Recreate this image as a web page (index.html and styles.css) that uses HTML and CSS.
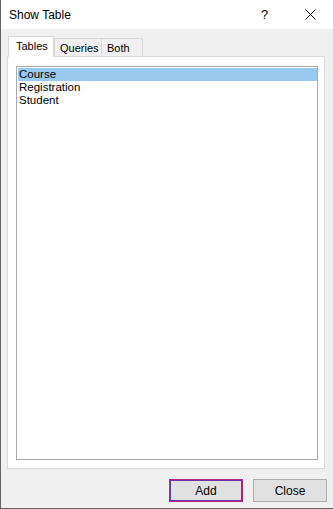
FILE: index.html
```html
<!DOCTYPE html>
<html>
<head>
<meta charset="utf-8">
<link rel="stylesheet" href="styles.css">
</head>
<body>
<div class="window">
  <div class="titlebar">
    <span class="title">Show Table</span>
    <span class="help">?</span>
    <span class="close-x">
      <svg width="11" height="11" viewBox="0 0 11 11"><path d="M0.5 0.5 L10.5 10.5 M10.5 0.5 L0.5 10.5" stroke="#000" stroke-width="1" fill="none"/></svg>
    </span>
  </div>
  <div class="content">
    <div class="tabs">
      <div class="tab active tab-tables">Tables</div>
      <div class="tab tab-queries">Queries</div>
      <div class="tab tab-both">Both</div>
    </div>
    <div class="panel">
      <div class="listbox">
        <div class="item selected">Course</div>
        <div class="item">Registration</div>
        <div class="item">Student</div>
      </div>
    </div>
    <div class="buttons">
      <button class="btn default">Add</button>
      <button class="btn">Close</button>
    </div>
  </div>
</div>
</body>
</html>
```
FILE: styles.css
```css
html, body {
  margin: 0;
  padding: 0;
}
body {
  width: 333px;
  height: 509px;
  overflow: hidden;
  font-family: "Liberation Sans", Arial, sans-serif;
  font-size: 12px;
  color: #000;
}
.window {
  box-sizing: border-box;
  width: 333px;
  height: 509px;
  border-left: 1px solid #646464;
  border-bottom: 1px solid #646464;
  background: #f0f0f0;
  display: flex;
  flex-direction: column;
}
.titlebar {
  height: 29px;
  background: #fff;
  display: flex;
  align-items: center;
  padding-left: 8px;
}
.title {
  flex: 1;
  font-size: 12px;
}
.help {
  font-size: 13px;
  width: 12px;
  margin-right: 32px;
}
.close-x {
  width: 11px;
  height: 11px;
  margin-right: 17px;
  display: flex;
}
.content {
  padding: 7px 0 0 6px;
  display: flex;
  flex-direction: column;
}
.tabs {
  display: flex;
  align-items: flex-end;
  height: 20px;
  padding-left: 1px;
  position: relative;
  z-index: 1;
}
.tab {
  box-sizing: border-box;
  height: 18px;
  border: 1px solid #d9d9d9;
  border-bottom: none;
  background: #f0f0f0;
  padding: 3px 0 0 5px;
  margin-left: -1px;
  line-height: 13px;
  font-size: 11px;
  white-space: nowrap;
}
.tab-queries {
  width: 48px;
  margin-left: 0;
}
.tab-both {
  width: 42px;
}
.tab.active {
  width: 46px;
  height: 21px;
  margin-bottom: -1px;
  margin-left: 0;
  background: #fff;
  padding: 3px 0 0 7px;
}
.panel {
  box-sizing: border-box;
  width: 318px;
  height: 413px;
  background: #fff;
  border: 1px solid #d9d9d9;
  padding: 9px 6px 8px 8px;
  display: flex;
}
.listbox {
  flex: 1;
  border: 1px solid #a9a9a9;
  padding: 1px 0 1px 1px;
}
.item {
  height: 13px;
  line-height: 13px;
  padding-left: 1px;
  font-size: 11.5px;
}
.item.selected {
  background: #99c9ef;
}
.buttons {
  display: flex;
  justify-content: flex-end;
  gap: 10px;
  padding: 10px 6px 0 0;
}
.btn {
  box-sizing: border-box;
  width: 74px;
  height: 23px;
  background: #e1e1e1;
  border: 1px solid #adadad;
  font-family: "Liberation Sans", Arial, sans-serif;
  font-size: 12px;
  color: #000;
  padding: 0;
  margin: 0;
}
.btn.default {
  border: 1px solid #c0247a;
  box-shadow: inset 0 0 0 1px #6a35a8;
}
```
